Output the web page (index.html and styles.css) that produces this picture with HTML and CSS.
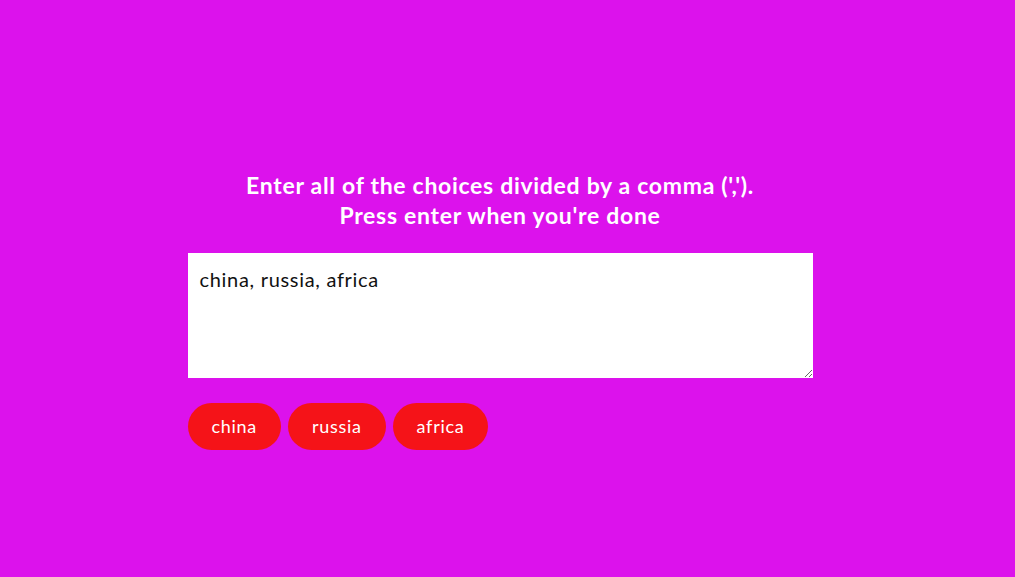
FILE: index.html
```html
<!DOCTYPE html>
<html lang="en">
<head>
<meta charset="UTF-8">
<title>Random Choice Picker</title>
<link rel="stylesheet" href="styles.css">
</head>
<body>
  <div class="container">
    <h3 class="title">Enter all of the choices divided by a comma (',').<br>Press enter when you're done</h3>
    <textarea class="choices" placeholder="Enter choices here...">china, russia, africa</textarea>
    <div class="tags">
      <span class="tag">china</span>
      <span class="tag">russia</span>
      <span class="tag">africa</span>
    </div>
  </div>
</body>
</html>
```
FILE: styles.css
```css
* {
  box-sizing: border-box;
}

body {
  margin: 0;
  height: 100vh;
  overflow: hidden;
  background-color: #dc12ec;
  font-family: "Lato", "Noto Sans", sans-serif;
  display: flex;
  flex-direction: column;
  align-items: center;
  justify-content: center;
  padding: 52px 15px 0 0;
}

.container {
  width: 625px;
}

.title {
  color: #ffffff;
  margin: 0 0 23px;
  text-align: center;
  font-size: 23px;
  letter-spacing: 0.7px;
  line-height: 30px;
  font-weight: 700;
}

.choices {
  display: block;
  width: 100%;
  height: 125px;
  border: none;
  padding: 14px 12px;
  font-family: inherit;
  font-size: 20px;
  letter-spacing: 0.7px;
  color: #111;
  margin: 0 0 25px;
  background: #fff;
}

.tags {
  display: flex;
  flex-wrap: wrap;
}

.tag {
  background-color: #f51318;
  color: #fff;
  border-radius: 50px;
  padding: 13px 24px;
  margin: 0 7px 10px 0;
  font-size: 18px;
  letter-spacing: 0.7px;
  line-height: 21px;
}
```
